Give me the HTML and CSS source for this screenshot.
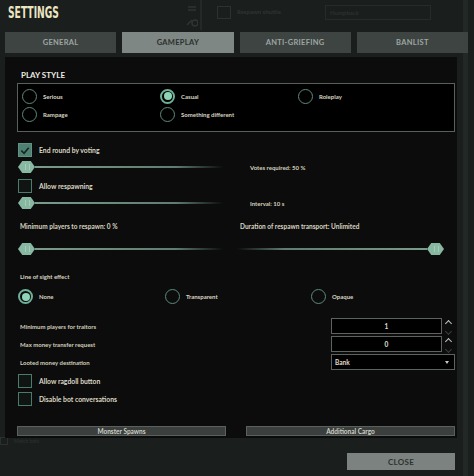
FILE: index.html
```html
<!DOCTYPE html>
<html lang="en">
<head>
<meta charset="utf-8">
<title>Settings</title>
<link rel="stylesheet" href="styles.css">
</head>
<body>
<div class="screen">
  <!-- dimmed menu behind the dialog -->
  <div class="backdrop">
    <div class="bd-line"></div>
    <div class="bd-icons">
      <svg width="12" height="24" viewBox="0 0 12 24"><path d="M2 4h8M2 7h8" stroke="#2f3532" stroke-width="1.5"/><path d="M1 22l5-5" stroke="#2f3532" stroke-width="1.5"/><circle cx="9" cy="20" r="3" fill="none" stroke="#2f3532" stroke-width="1.5"/></svg>
    </div>
    <div class="bd-check"></div>
    <div class="bd-text">Respawn shuttle</div>
    <div class="bd-select">Humpback</div>
    <div class="bd-foot"><span class="bd-foot-box"></span><span>Match bots</span></div>
    <div class="bd-edge"></div>
  </div>

  <header class="title"><span class="title-text">SETTINGS</span></header>

  <nav class="tabs">
    <div class="tab">GENERAL</div>
    <div class="tab active">GAMEPLAY</div>
    <div class="tab">ANTI-GRIEFING</div>
    <div class="tab">BANLIST</div>
  </nav>

  <main class="panel">
    <div class="section-title">PLAY STYLE</div>
    <div class="radio-box">
      <label class="radio"><span class="dot"></span><span class="rlabel">Serious</span></label>
      <label class="radio"><span class="dot on"></span><span class="rlabel">Casual</span></label>
      <label class="radio"><span class="dot"></span><span class="rlabel">Roleplay</span></label>
      <label class="radio"><span class="dot"></span><span class="rlabel">Rampage</span></label>
      <label class="radio"><span class="dot"></span><span class="rlabel">Something different</span></label>
    </div>

    <div class="check-row first">
      <span class="box checked"><svg width="13" height="13" viewBox="0 0 13 13"><path d="M2.5 6.5l3 3 5-6" fill="none" stroke="#16251f" stroke-width="1.8"/></svg></span>
      <span class="clabel">End round by voting</span>
    </div>
    <div class="slider-row s1">
      <div class="slider"><span class="knob"></span><span class="track"></span></div>
      <div class="slabel">Votes required: 50 %</div>
    </div>

    <div class="check-row">
      <span class="box"></span>
      <span class="clabel">Allow respawning</span>
    </div>
    <div class="slider-row s2">
      <div class="slider"><span class="knob"></span><span class="track"></span></div>
      <div class="slabel">Interval: 10 s</div>
    </div>

    <div class="pair labels">
      <div class="plabel">Minimum players to respawn: 0 %</div>
      <div class="plabel">Duration of respawn transport: Unlimited</div>
    </div>
    <div class="pair sliders">
      <div class="slider"><span class="knob"></span><span class="track"></span></div>
      <div class="slider right"><span class="track rev"></span><span class="knob"></span></div>
    </div>

    <div class="section-label">Line of sight effect</div>
    <div class="los">
      <label class="radio"><span class="dot on"></span><span class="rlabel">None</span></label>
      <label class="radio"><span class="dot"></span><span class="rlabel">Transparent</span></label>
      <label class="radio"><span class="dot"></span><span class="rlabel">Opaque</span></label>
    </div>

    <div class="fields">
      <div class="field">
        <span class="flabel">Minimum players for traitors</span>
        <div class="num"><span class="num-box">1</span><span class="spin"><i class="up"></i><i class="down"></i></span></div>
      </div>
      <div class="field">
        <span class="flabel">Max money transfer request</span>
        <div class="num"><span class="num-box">0</span><span class="spin"><i class="up"></i><i class="down"></i></span></div>
      </div>
      <div class="field">
        <span class="flabel">Looted money destination</span>
        <div class="select"><span>Bank</span><i class="caret"></i></div>
      </div>
    </div>

    <div class="check-row c3">
      <span class="box"></span>
      <span class="clabel">Allow ragdoll button</span>
    </div>
    <div class="check-row c4">
      <span class="box"></span>
      <span class="clabel">Disable bot conversations</span>
    </div>

    <div class="buttons">
      <div class="btn">Monster Spawns</div>
      <div class="btn">Additional Cargo</div>
    </div>
  </main>

  <footer class="footer">
    <div class="close">CLOSE</div>
  </footer>
</div>
</body>
</html>
```

FILE: styles.css
```css
* { box-sizing: border-box; }

html, body {
  margin: 0;
  padding: 0;
}

body {
  width: 474px;
  height: 476px;
  overflow: hidden;
  background: #1a1e1c;
  font-family: Lato, "Noto Sans", sans-serif;
  font-weight: 700;
  color: #dcd8c4;
}

.screen {
  position: relative;
  width: 474px;
  height: 476px;
}

/* faint menu layer underneath */
.backdrop {
  position: absolute;
  inset: 0;
  pointer-events: none;
}
.bd-line {
  position: absolute;
  left: 200px;
  top: 0;
  width: 2px;
  height: 30px;
  background: #242926;
}
.bd-icons {
  position: absolute;
  left: 186px;
  top: 3px;
}
.bd-check {
  position: absolute;
  left: 217px;
  top: 6px;
  width: 14px;
  height: 13px;
  border: 1px solid #2c3230;
}
.bd-text {
  position: absolute;
  left: 237px;
  top: 8px;
  font-size: 6px;
  color: #2f3532;
}
.bd-select {
  position: absolute;
  left: 325px;
  top: 5px;
  width: 106px;
  height: 15px;
  border: 1px solid #262b29;
  font-size: 6px;
  color: #2c3230;
  padding: 3px 4px;
}
.bd-foot {
  position: absolute;
  left: 0;
  top: 437px;
  display: flex;
  gap: 6px;
  font-size: 5px;
  color: #2a302d;
  align-items: center;
}
.bd-foot-box {
  width: 8px;
  height: 8px;
  border: 1px solid #2a302d;
}
.bd-edge {
  position: absolute;
  left: 463px;
  top: 0;
  width: 5px;
  height: 476px;
  background: #222826;
}

.title {
  position: relative;
  height: 32px;
  padding: 5px 0 0 8px;
  font-family: "Liberation Sans Narrow", "DejaVu Sans Condensed", sans-serif;
  font-weight: 700;
  font-size: 15px;
  line-height: 16px;
  color: #ece5c2;
}
.title-text {
  display: inline-block;
  transform: scaleX(0.68);
  transform-origin: left center;
}

.tabs {
  position: relative;
  display: grid;
  grid-template-columns: repeat(4, 1fr);
  column-gap: 6px;
  margin: 0 6px 0 5px;
  height: 21px;
}
.tab {
  background: #3e4442;
  color: #9fa6a3;
  font-size: 7.5px;
  letter-spacing: 0.3px;
  display: flex;
  align-items: center;
  justify-content: center;
}
.tab.active {
  background: #7e8783;
  color: #2a2f2d;
}

.panel {
  position: relative;
  margin: 4px 0 0 5px;
  width: 452px;
  height: 381px;
  background: #0c0c0c;
  padding: 12px 2px 0 12px;
}

.section-title {
  height: 12px;
  line-height: 12px;
  font-size: 8px;
  color: #ecebe4;
  padding-left: 4px;
}

.radio-box {
  margin-top: 2px;
  height: 49px;
  border: 1px solid #58605d;
  background: #000;
  padding: 3px 0 8px 4px;
  display: grid;
  grid-template-columns: 138px 138px 1fr;
  grid-auto-rows: 18px;
}

.radio {
  display: flex;
  align-items: center;
  gap: 6px;
}
.dot {
  width: 15px;
  height: 15px;
  border-radius: 50%;
  border: 1.5px solid #5d8a7c;
  flex: none;
  display: flex;
  align-items: center;
  justify-content: center;
}
.dot.on {
  border: 2px solid #6fae98;
}
.dot.on::after {
  content: "";
  width: 8px;
  height: 8px;
  border-radius: 50%;
  background: #8ed5b8;
}
.rlabel {
  font-size: 6px;
  color: #d9d5c2;
}

.check-row {
  display: flex;
  align-items: center;
  gap: 7px;
  height: 14px;
  margin-top: 6px;
  padding-left: 1px;
}
.check-row.first { margin-top: 11px; }
.check-row.c3 { margin-top: 4px; }
.check-row.c4 { margin-top: 4px; }
.box {
  width: 14px;
  height: 14px;
  border: 1.5px solid #4c7b6d;
  background: #101412;
  flex: none;
  display: flex;
}
.box.checked {
  background: #4f8172;
  border-color: #5f9484;
}
.clabel {
  font-size: 6.8px;
  color: #ddd9c6;
}

.slider-row {
  display: grid;
  grid-template-columns: 206px 1fr;
  height: 12px;
  margin-top: 4px;
  align-items: center;
}
.slabel {
  padding-left: 27px;
  font-size: 6px;
  color: #d4d0bd;
}

.slider {
  display: flex;
  align-items: center;
  height: 12px;
  padding-left: 1px;
}
.slider.right {
  padding: 0 11px 0 0;
}
.knob {
  width: 17px;
  height: 12px;
  flex: none;
  background: #88b8a2;
  clip-path: polygon(25% 0, 75% 0, 100% 50%, 75% 100%, 25% 100%, 0 50%);
  position: relative;
}
.knob::after {
  content: "";
  position: absolute;
  left: 7px;
  top: 3px;
  width: 3px;
  height: 6px;
  border-left: 1px solid #a2cdb9;
  border-right: 1px solid #a2cdb9;
}
.track {
  flex: 1;
  height: 2px;
  background: linear-gradient(to right, #7a9c8d 0%, #5f7d70 75%, rgba(80, 105, 95, 0) 100%);
}
.track.rev {
  background: linear-gradient(to left, #7a9c8d 0%, #5f7d70 75%, rgba(80, 105, 95, 0) 100%);
}

.pair {
  display: grid;
  grid-template-columns: 206px 1fr;
  column-gap: 14px;
}
.pair.labels {
  margin-top: 12px;
  height: 10px;
  align-items: center;
}
.plabel {
  padding-left: 3px;
  font-size: 6.5px;
  color: #d8d4c1;
}
.pair.sliders {
  margin-top: 12px;
  height: 12px;
}

.section-label {
  margin-top: 17px;
  height: 10px;
  line-height: 10px;
  padding-left: 3px;
  font-size: 6px;
  color: #d8d4c1;
}

.los {
  margin-top: 7px;
  height: 14px;
  display: grid;
  grid-template-columns: 147px 146px 1fr;
  padding-left: 1px;
}

.fields {
  margin-top: 15px;
  display: flex;
  flex-direction: column;
  gap: 2px;
}
.field {
  display: grid;
  grid-template-columns: 1fr 124px;
  height: 16px;
  align-items: center;
}
.flabel {
  padding-left: 3px;
  font-size: 6px;
  color: #d2cebb;
}
.num {
  display: flex;
  height: 16px;
}
.num-box {
  width: 111px;
  height: 16px;
  border: 1px solid #5b625f;
  background: #000;
  color: #e2e0d6;
  font-size: 6.5px;
  display: flex;
  align-items: center;
  justify-content: center;
}
.spin {
  flex: 1;
  display: flex;
  flex-direction: column;
  align-items: center;
  justify-content: flex-start;
  padding-top: 3px;
  gap: 3px;
}
.spin i {
  width: 5px;
  height: 5px;
  border-left: 1.3px solid #bfc4c1;
  border-top: 1.3px solid #bfc4c1;
  transform: rotate(45deg);
}
.spin i.down {
  border-color: #3a3f3d;
  transform: rotate(225deg);
}
.select {
  height: 16px;
  border: 1px solid #5b625f;
  background: #000;
  display: flex;
  align-items: center;
  justify-content: space-between;
  padding: 0 5px 0 3px;
  font-size: 6.5px;
  color: #e0ddd0;
}
.caret {
  width: 0;
  height: 0;
  border-left: 2.5px solid transparent;
  border-right: 2.5px solid transparent;
  border-top: 3px solid #c4c8c6;
}

.buttons {
  margin-top: 20px;
  display: grid;
  grid-template-columns: 1fr 1fr;
  column-gap: 20px;
  height: 10px;
}
.btn {
  background: #3b403e;
  border: 1px solid #59605d;
  color: #cfcfc6;
  font-size: 6.5px;
  display: flex;
  align-items: center;
  justify-content: center;
}

.footer {
  position: relative;
  display: flex;
  justify-content: flex-end;
  padding: 15px 19px 0 0;
}
.close {
  width: 108px;
  height: 17px;
  background: #7b827f;
  color: #2d3230;
  font-size: 8px;
  letter-spacing: 0.3px;
  display: flex;
  align-items: center;
  justify-content: center;
}
```
